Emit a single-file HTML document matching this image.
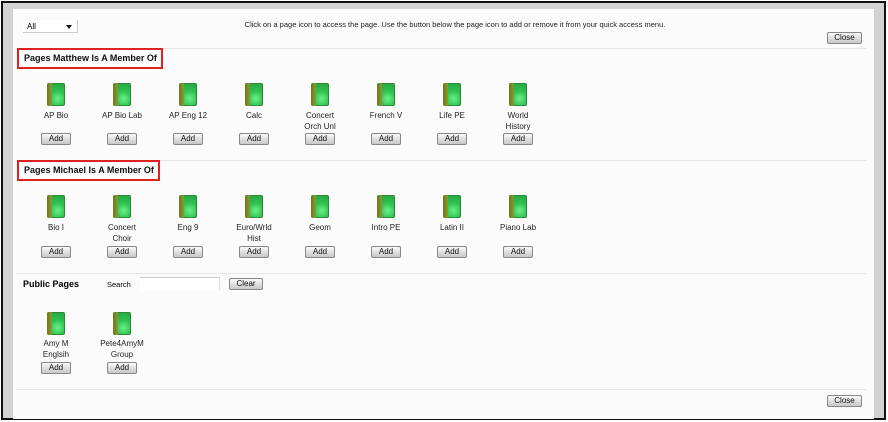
<!DOCTYPE html>
<html><head><style>
*{box-sizing:border-box;margin:0;padding:0}
body{width:888px;height:422px;background:#fff;font-family:"Liberation Sans",sans-serif;position:relative;overflow:hidden}
.frame{position:absolute;left:1px;top:1px;width:885px;height:419px;border:2px solid #111;background:#d2d2d2}
.panel{position:absolute;left:13px;top:9px;width:861px;height:410px;background:#fbfbfb}
.abs{position:absolute}
.t{font-size:8px;color:#222;position:absolute;text-align:center;width:66px;line-height:11px}
.btn{position:absolute;height:12px;border:1px solid #888;border-radius:2px;background:linear-gradient(#fafafa,#ddd 55%,#c8c8c8);font-size:8px;text-align:center;line-height:10px;color:#111}
.book{position:absolute;width:18px;height:23px;border-radius:2px;background:radial-gradient(circle at 60% 70%,#6cf08a,#2fc14f 45%,#25a03e);border:1px solid #2b8a3a}
.book:before{content:"";position:absolute;left:-1px;top:-1px;width:5px;height:23px;background:linear-gradient(90deg,#6a7a20,#8a9a30);border-radius:2px 0 0 2px}
.sep{position:absolute;left:16px;width:850px;height:1px;background:#e6e6e6}
.hdr{position:absolute;border:2px solid #d22;font-size:9px;font-weight:bold;color:#111;padding-left:5px;line-height:16px;white-space:nowrap;overflow:hidden}
</style></head><body>
<div class="frame"></div>
<div class="panel"></div>
<div class="abs" style="left:23px;top:20px;width:55px;height:13px;border-right:1px solid #ccc;border-bottom:1px solid #ccc;background:#fff;font-size:8px;padding-left:4px;line-height:13px">All<span style="position:absolute;right:5px;top:5px;border:3px solid transparent;border-top:4px solid #111"></span></div>
<div class="abs" style="left:200px;top:20px;width:510px;text-align:center;font-size:7.5px;color:#222">Click on a page icon to access the page. Use the button below the page icon to add or remove it from your quick access menu.</div>
<div class="btn" style="left:827px;top:32px;width:35px">Close</div>
<div class="sep" style="top:48px"></div>
<div class="hdr" style="left:17px;top:48px;width:146px;height:21px">Pages Matthew Is A Member Of</div>
<div class="sep" style="top:160px"></div>
<div class="hdr" style="left:17px;top:160px;width:143px;height:21px">Pages Michael Is A Member Of</div>
<div class="sep" style="top:273px"></div>
<div class="abs" style="left:23px;top:279px;font-size:9px;font-weight:bold">Public Pages</div>
<div class="abs" style="left:107px;top:280px;font-size:7.5px">Search</div>
<div class="abs" style="left:140px;top:277px;width:80px;height:13px;border-top:1px solid #ccc;border-right:1px solid #ddd;background:#fff"></div>
<div class="btn" style="left:229px;top:278px;width:34px">Clear</div>
<div class="sep" style="top:389px"></div>
<div class="btn" style="left:827px;top:395px;width:35px">Close</div>
<div id="g"></div>
<script>
var rows=[[83,110,133,["AP Bio","AP Bio Lab","AP Eng 12","Calc","Concert<br>Orch Unl","French V","Life PE","World<br>History"]],
[195,222,246,["Bio I","Concert<br>Choir","Eng 9","Euro/Wrld<br>Hist","Geom","Intro PE","Latin II","Piano Lab"]],
[312,338,362,["Amy M<br>Englsih","Pete4AmyM<br>Group"]]];
var h="";
rows.forEach(function(r){r[3].forEach(function(n,i){var c=56+66*i;
h+='<div class="book" style="left:'+(c-9)+'px;top:'+r[0]+'px"></div>';
h+='<div class="t" style="left:'+(c-33)+'px;top:'+r[1]+'px">'+n+'</div>';
h+='<div class="btn" style="left:'+(c-15)+'px;top:'+r[2]+'px;width:30px">Add</div>';});});
document.getElementById("g").innerHTML=h;
</script>
</body></html>
